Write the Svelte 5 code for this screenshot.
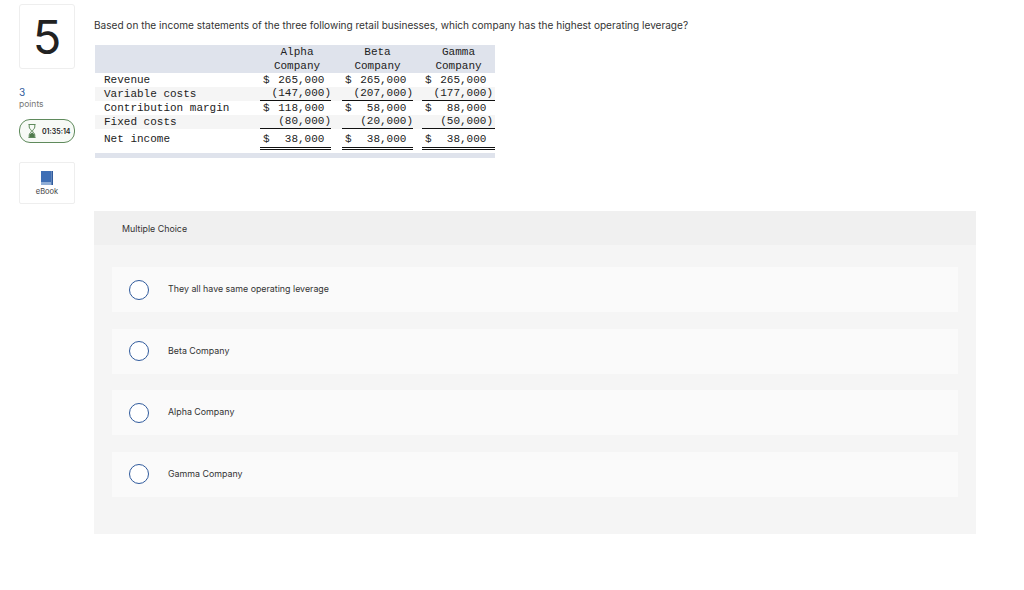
<script>
  const rows = [
    { label: "Revenue", cells: [["$", "265,000 "], ["$", "265,000 "], ["$", "265,000 "]], cls: "" },
    { label: "Variable costs", cells: [["", "(147,000)"], ["", "(207,000)"], ["", "(177,000)"]], cls: "alt under" },
    { label: "Contribution margin", cells: [["$", "118,000 "], ["$", "58,000 "], ["$", "88,000 "]], cls: "" },
    { label: "Fixed costs", cells: [["", "(80,000)"], ["", "(20,000)"], ["", "(50,000)"]], cls: "alt under" },
    { label: "Net income", cells: [["$", "38,000 "], ["$", "38,000 "], ["$", "38,000 "]], cls: "net" }
  ];
  const heads = ["Alpha", "Beta", "Gamma"];
  const choices = ["They all have same operating leverage", "Beta Company", "Alpha Company", "Gamma Company"];
</script>

<div class="page">
  <aside class="side">
    <div class="num">5</div>
    <div class="pts"><span>3</span>points</div>
    <div class="timer">
      <svg width="8" height="14" viewBox="0 0 8 14">
        <path d="M0.500 0.500h7M0.500 13.500h7M1.200 0.500v2.500c0 1.800 2.300 2.800 2.300 4s-2.300 2.200-2.300 4v2.500M6.800 0.500v2.500c0 1.800-2.300 2.800-2.300 4s2.300 2.200 2.300 4v2.500" fill="none" stroke="#5f8a5c" stroke-width="1" />
        <path d="M1.500 13v-1.800c0-1.200 2.500-2.200 2.500-2.700s2.500 1.500 2.500 2.700V13z" fill="#4f7a4c" />
      </svg>
      <b>01:35:14</b>
    </div>
    <div class="ebook">
      <svg width="12" height="14" viewBox="0 0 12 14">
        <path d="M0 0h10.500v11H0z" fill="#3f6fb5" />
        <path d="M0 11h12v3H0z" fill="#8fadd6" />
        <path d="M10.500 0H12v14h-1.500z" fill="#2f5a9c" />
      </svg>
      eBook
    </div>
  </aside>

  <main class="main">
    <p class="question">Based on the income statements of the three following retail businesses, which company has the highest operating leverage?</p>

    <table>
      <thead>
        <tr>
          <th class="lab"></th>
          {#each heads as h, i}
            <th class="val c{i}">{h}<br />Company</th>
            {#if i < 2}<th class="gap g{i}"></th>{/if}
          {/each}
        </tr>
      </thead>
      <tbody>
        {#each rows as r}
          <tr class={r.cls}>
            <td class="lab">{r.label}</td>
            {#each r.cells as c, i}
              <td class="val c{i}">
                <div class="cell"><span>{c[0]}</span><span class="amt">{c[1]}</span></div>
              </td>
              {#if i < 2}<td class="gap g{i}"></td>{/if}
            {/each}
          </tr>
        {/each}
      </tbody>
    </table>
    <div class="endbar"></div>

    <section class="panel">
      <header>Multiple Choice</header>
      <ul>
        {#each choices as c}
          <li><span class="radio"></span><span class="txt">{c}</span></li>
        {/each}
      </ul>
    </section>
  </main>
</div>

<style>
  :global(body) {
    margin: 0;
    background: #fff;
  }
  .page {
    display: flex;
    width: 1024px;
    height: 590px;
    overflow: hidden;
    font-family: Inter, "Liberation Sans", sans-serif;
    color: #333;
  }
  .side {
    width: 56px;
    margin-left: 19px;
    padding-top: 4px;
    flex: none;
  }
  .num {
    height: 65px;
    border: 1px solid #eee;
    border-radius: 3px;
    box-sizing: border-box;
    display: flex;
    align-items: center;
    justify-content: center;
    font-size: 47px;
    font-weight: 400;
    color: #222;
  }
  .pts {
    margin-top: 17px;
    font-size: 8.500px;
    line-height: 12px;
    color: #777;
  }
  .pts span {
    display: block;
    font-size: 10px;
    color: #2f5a9c;
  }
  .timer {
    margin-top: 9px;
    height: 24px;
    box-sizing: border-box;
    border: 1.300px solid #5f8a5c;
    border-radius: 11px;
    background: #f7faf6;
    display: flex;
    align-items: center;
    gap: 6px;
    padding-left: 8px;
  }
  .timer b {
    font-size: 7px;
    font-weight: 600;
    color: #222;
  }
  .ebook {
    margin-top: 19px;
    height: 42px;
    box-sizing: border-box;
    border: 1px solid #eee;
    border-radius: 2px;
    display: flex;
    flex-direction: column;
    align-items: center;
    padding-top: 8px;
    gap: 1px;
    font-size: 7.500px;
    line-height: 11px;
    color: #444;
  }
  .main {
    margin-left: 19px;
    width: 882px;
    flex: none;
  }
  .question {
    margin: 18px 0 0;
    font-size: 10.050px;
    line-height: 14px;
    color: #333;
  }
  table {
    margin: 13px 0 0 1px;
    width: 400px;
    border-collapse: separate;
    border-spacing: 0;
    table-layout: fixed;
    font-family: "Liberation Mono", monospace;
    font-size: 11px;
    color: #222;
  }
  th {
    background: #dfe3ec;
    font-weight: 400;
    line-height: 14px;
    padding: 0;
    height: 28px;
  }
  th.c0 {
    padding-left: 3px;
    box-sizing: border-box;
  }
  td {
    padding: 0;
    height: 14px;
    line-height: 14px;
  }
  .lab {
    width: 165px;
    padding-left: 9px;
    box-sizing: border-box;
    text-align: left;
  }
  .val {
    width: 71px;
    text-align: center;
  }
  .val.c2 {
    width: 73px;
  }
  .g0 {
    width: 11px;
  }
  .g1 {
    width: 9px;
  }
  .cell {
    display: flex;
    justify-content: space-between;
    padding-left: 3px;
    white-space: pre;
  }
  .c2 .cell {
    padding-right: 2px;
  }
  tr.alt td {
    background: #f5f5f5;
  }
  tr.under td {
    line-height: 13px;
  }
  tr.under .val {
    height: 13px;
    border-bottom: 1px solid #111;
  }
  tr.net td {
    height: 18px;
    vertical-align: top;
    padding-top: 3px;
  }
  tr.net .lab {
    height: 21px;
  }
  tr.net .val {
    height: 15px;
    border-bottom: 3px double #111;
  }
  .endbar {
    margin-left: 1px;
    width: 400px;
    height: 5px;
    margin-top: 3px;
    background: #dfe3ec;
  }
  .panel {
    margin-top: 53px;
    height: 323px;
    background: #f5f5f5;
  }
  header {
    height: 34px;
    box-sizing: border-box;
    background: #f0f0f0;
    padding: 11px 0 0 28px;
    font-size: 8.850px;
    line-height: 13px;
  }
  ul {
    list-style: none;
    margin: 22px 18px 0;
    padding: 0;
    display: flex;
    flex-direction: column;
    gap: 16.500px;
  }
  li {
    height: 45px;
    background: #fafafa;
    display: flex;
    align-items: center;
    padding-left: 17px;
    font-size: 8.850px;
  }
  .txt {
    margin-bottom: 2px;
  }
  .radio {
    width: 20px;
    height: 20px;
    box-sizing: border-box;
    border: 1px solid #2f5a9c;
    border-radius: 50%;
    background: #fff;
    margin-right: 19px;
  }
</style>
